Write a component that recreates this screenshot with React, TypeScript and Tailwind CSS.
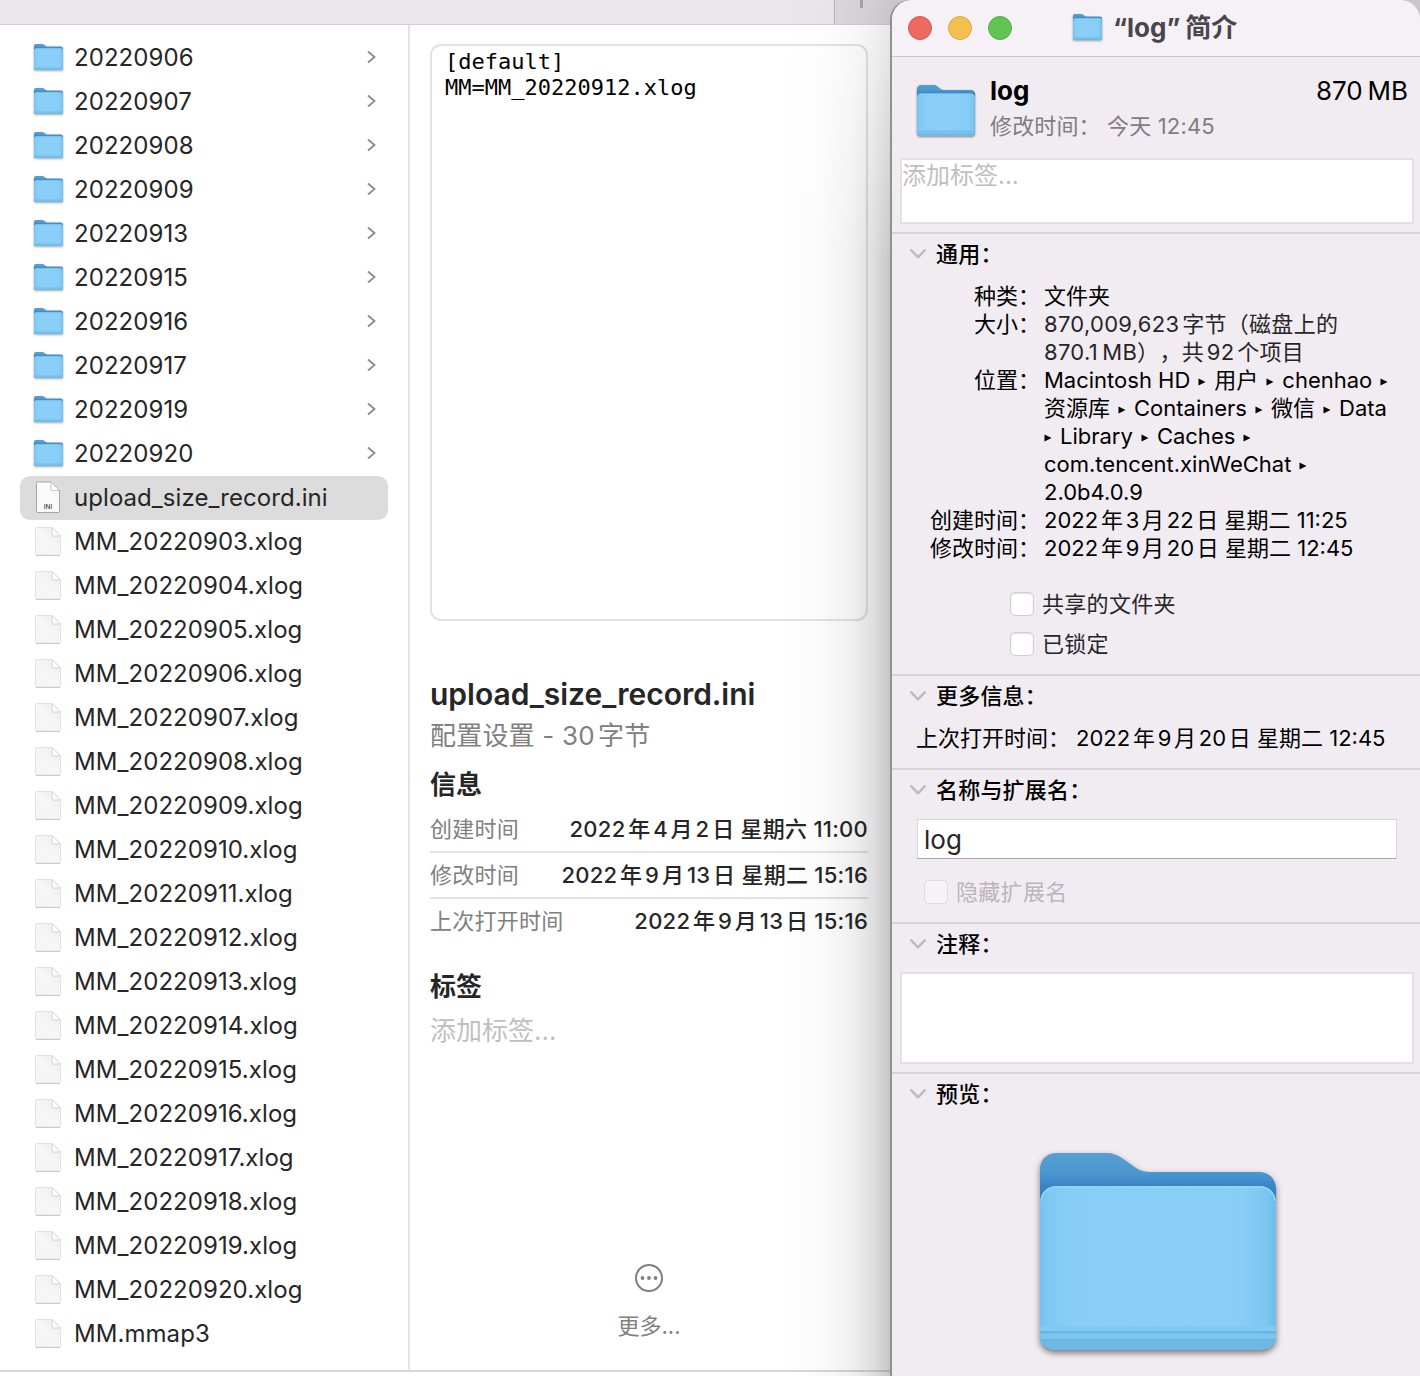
import { useId, type ReactNode } from 'react';
import clsx from 'clsx';

const folders = ['20220906', '20220907', '20220908', '20220909', '20220913', '20220915', '20220916', '20220917', '20220919', '20220920'];

const logs = [
	'MM_20220903.xlog',
	'MM_20220904.xlog',
	'MM_20220905.xlog',
	'MM_20220906.xlog',
	'MM_20220907.xlog',
	'MM_20220908.xlog',
	'MM_20220909.xlog',
	'MM_20220910.xlog',
	'MM_20220911.xlog',
	'MM_20220912.xlog',
	'MM_20220913.xlog',
	'MM_20220914.xlog',
	'MM_20220915.xlog',
	'MM_20220916.xlog',
	'MM_20220917.xlog',
	'MM_20220918.xlog',
	'MM_20220919.xlog',
	'MM_20220920.xlog',
	'MM.mmap3',
];

const Folder = ({ className }: { className?: string }) => {
	const id = useId();

	return (
		<svg viewBox="0 0 236 197" preserveAspectRatio="none" className={clsx('shrink-0 overflow-visible', className)}>
			<defs>
				<linearGradient id={`${id}b`} x1="0" y1="0" x2="0" y2="1">
					<stop offset="0" stopColor="#569fd0" />
					<stop offset="0.1" stopColor="#4b97cf" />
					<stop offset="0.18" stopColor="#3781c5" />
				</linearGradient>
				<linearGradient id={`${id}f`} x1="0" y1="0" x2="1" y2="0">
					<stop offset="0" stopColor="#76c2ee" />
					<stop offset="0.04" stopColor="#80c9f3" />
					<stop offset="0.14" stopColor="#88cef7" />
					<stop offset="0.5" stopColor="#8acff8" />
					<stop offset="0.86" stopColor="#88cef7" />
					<stop offset="0.96" stopColor="#7cc6f1" />
					<stop offset="1" stopColor="#70bae8" />
				</linearGradient>
			</defs>
			<path
				fill={`url(#${id}b)`}
				d="M0 17C0 6 7 0 17 0H67C73 0 77 2 82 5L96 15C101 18 105 19 111 19H219C229 19 236 26 236 36V180C236 190 229 197 219 197H17C7 197 0 190 0 180Z"
			/>
			<path fill={`url(#${id}f)`} d="M0 50C0 40 7 33 17 33H219C229 33 236 40 236 50V180C236 190 229 197 219 197H17C7 197 0 190 0 180Z" />
			<path fill="none" stroke="#92d8fb" strokeWidth="1.5" d="M1 48C2 39 8 33.7 17 33.7H219C228 33.7 234 39 235 48" />
			<path fill="#6eb8e4" d="M0 187H236C234 193 228 197 219 197H17C8 197 2 193 0 187Z" />
			<path fill="#80c9f3" d="M0 173H236V178H0Z" />
			<path fill="#7cc5f0" d="M0 181H236V186H0Z" />
			<path fill="#6ab4e0" d="M0 178H236V180.500H0ZM0 186H236V187.500H0Z" />
		</svg>
	);
};

const File = ({ ini }: { ini?: boolean }) => {
	const id = useId();

	return (
		<svg viewBox="0 0 30 32" className="mb-[2px] h-8 w-[30px] shrink-0 overflow-visible">
			<defs>
				<linearGradient id={id} x1="1" y1="0" x2="0" y2="1">
					<stop offset="0" stopColor="#ececec" />
					<stop offset="0.5" stopColor="#f6f6f6" />
					<stop offset="1" stopColor="#f4f4f4" />
				</linearGradient>
			</defs>
			{ini ? (
				<>
					<path d="M4.500 1H18L26.500 9.500V30.500Q26.500 31.500 25.500 31.500H4.500Q3.500 31.500 3.500 30.500V2Q3.500 1 4.500 1Z" fill="#fafafa" stroke="#a6a6a6" strokeWidth="1" />
					<path d="M18 1V8.500Q18 9.500 19 9.500H26.500Z" fill="#fff" stroke="#b9b9b9" strokeWidth="0.8" />
					<text x="15" y="27.500" textAnchor="middle" fontSize="6.500" fill="#222" fontFamily="Inter, sans-serif">
						INI
					</text>
				</>
			) : (
				<>
					<path d="M3.500 2.500H19L27.500 11V29Q27.500 30 26.500 30H3.500Q2.500 30 2.500 29V3.500Q2.500 2.500 3.500 2.500Z" fill={`url(#${id})`} stroke="#e2e2e2" strokeWidth="1" />
					<path d="M3 30.500H27" stroke="#cbcbcb" strokeWidth="1" />
					<path d="M19 2.500V10Q19 11 20 11H27.500Z" fill="#fff" stroke="#cfcfcf" strokeWidth="0.9" />
				</>
			)}
		</svg>
	);
};

const Row = ({ icon, name, selected, arrow }: { icon: ReactNode; name: string; selected?: boolean; arrow?: boolean }) => (
	<li className={clsx('flex h-11 items-center rounded-[10px] pr-[11px] pl-[13px]', selected && 'bg-[#dcdcdc]')}>
		{icon}
		<span className="ml-[11px] flex-1 text-[24px] leading-[44px] tracking-[0.06px] text-[#262626]">{name}</span>
		{arrow && (
			<svg viewBox="0 0 12 16" className="mb-[2px] h-4 w-3" fill="none" stroke="#8c8c8c" strokeWidth="1.800">
				<path d="M3 2.500L9.500 8L3 13.500" />
			</svg>
		)}
	</li>
);

const InfoRow = ({ label, value, last }: { label: string; value: string; last?: boolean }) => (
	<div className={clsx('flex h-[46px] items-center justify-between text-[22px] tracking-[0.25px]', last ? 'pb-[2px]' : 'border-b-2 border-[#e3e3e3]')}>
		<span className="text-[#808080]">{label}</span>
		<span className="font-medium text-[#262626]">{value}</span>
	</div>
);

const Section = ({ title, className, children }: { title: string; className: string; children?: ReactNode }) => (
	<section className={clsx('border-t-2 border-[#d9d3da]', className)}>
		<h2 className="flex h-10 items-center pl-[18px] text-[22px] font-medium tracking-[0.2px] text-black">
			<svg viewBox="0 0 16 10" className="mr-[10px] h-[10px] w-4" fill="none" stroke="#bdb9be" strokeWidth="2.400" strokeLinecap="round" strokeLinejoin="round">
				<path d="M1.300 1.300L8 8.300L14.700 1.300" />
			</svg>
			{title}
		</h2>
		{children}
	</section>
);

const Detail = ({ label, children }: { label: string; children: ReactNode }) => (
	<div className="flex">
		<dt className="w-[148px] shrink-0 text-right">{label}</dt>
		<dd className="ml-1 whitespace-nowrap">{children}</dd>
	</div>
);

const CheckBox = ({ label, disabled }: { label: string; disabled?: boolean }) => (
	<label className={clsx('flex h-[33px] items-center gap-[8px] text-[22px] tracking-[0.3px]', disabled ? 'text-[#b9b5ba]' : 'text-[#272528]')}>
		<span
			className={clsx(
				'size-6 rounded-[5px] border',
				disabled ? 'border-[#dfdae0] bg-[#f6f3f7]' : 'border-[#d0ccd1] bg-white shadow-[inset_0_1px_2px_rgba(0,0,0,0.12)]',
			)}
		/>
		<span className="pt-[2px] leading-[31px]">{label}</span>
	</label>
);

const Arrow = ({ first }: { first?: boolean }) => (
	<svg viewBox="0 0 8 8" className={clsx('mr-[8px] inline-block size-2 align-[2px]', !first && 'ml-[8px]')}>
		<path d="M0.500 0.500L7.500 4L0.500 7.500Z" fill="#000" />
	</svg>
);

const App = () => (
	<div className="flex h-[1376px] w-[1420px] overflow-hidden bg-[#c9c5cb] font-['Inter','Noto_Sans_CJK_SC',sans-serif] [text-autospace:normal] [text-spacing-trim:space-all]">
		{/* FINDER */}
		<div className="relative flex w-[890px] shrink-0 flex-col bg-white">
			<div className="flex h-[25px] shrink-0 border-b border-[#d3ced5] bg-[#ebe6ec]">
				<div className="w-[834px]"></div>
				<div className="flex flex-1 border-l border-[#bbb6bd] bg-[#ddd7de] pl-[25px]">
					<div className="h-2 w-[3px] bg-[#aaa5ac]"></div>
				</div>
			</div>
			<div className="flex h-[1347px] shrink-0 border-b-2 border-[#d8d8d8]">
				<ul className="w-[410px] shrink-0 border-r-2 border-[#e3e3e3] pt-[11px] pr-5 pl-5">
					{folders.map((name) => (
						<Row key={name} name={name} arrow icon={<Folder className="mr-[0.500px] mb-[2px] ml-[0.500px] h-[26px] w-[29px] drop-shadow-[0_1px_1px_rgba(0,0,0,0.35)]" />} />
					))}
					<Row name="upload_size_record.ini" selected icon={<File ini />} />
					{logs.map((name) => (
						<Row key={name} name={name} icon={<File />} />
					))}
				</ul>
				<div className="flex w-[478px] flex-col pt-[19px] pr-[20px] pl-5">
					<pre className="h-[577px] w-[438px] shrink-0 rounded-[11px] border-2 border-[#e2e2e2] pt-[3px] pl-[13px] font-['DejaVu_Sans_Mono','Liberation_Mono',monospace] text-[22px] leading-[26px] text-black">
						{'[default]\nMM=MM_20220912.xlog'}
					</pre>
					<div className="mt-[54px] text-[30px] leading-[38px] font-semibold tracking-[-0.02px] text-[#262626]">upload_size_record.ini</div>
					<div className="mt-[4px] text-[26px] leading-[38px] tracking-[0.2px] text-[#808080]">配置设置 - 30字节</div>
					<div className="mt-[11px] text-[26px] leading-[38px] font-bold text-[#262626]">信息</div>
					<div className="mt-[3px]">
						<InfoRow label="创建时间" value="2022年4月2日 星期六 11:00" />
						<InfoRow label="修改时间" value="2022年9月13日 星期二 15:16" />
						<InfoRow label="上次打开时间" value="2022年9月13日 15:16" last />
					</div>
					<div className="mt-[23px] text-[26px] leading-[38px] font-bold text-[#262626]">标签</div>
					<div className="mt-[6px] text-[26px] leading-[38px] text-[#bfbfbf]">添加标签...</div>
					<div className="mt-[214px] flex flex-col items-center">
						<svg viewBox="0 0 28 28" className="size-7" fill="none" stroke="#7f7f7f" strokeWidth="2">
							<circle cx="14" cy="14" r="13" />
							<g fill="#7f7f7f" stroke="none">
								<circle cx="7.500" cy="14" r="1.900" />
								<circle cx="14" cy="14" r="1.900" />
								<circle cx="20.500" cy="14" r="1.900" />
							</g>
						</svg>
						<div className="mt-[18px] text-[22px] leading-[32px] text-[#808080]">更多...</div>
					</div>
				</div>
			</div>
			{/* shadow cast by the info window */}
			<div className="absolute top-0 right-0 h-full w-[110px] bg-[linear-gradient(to_right,transparent,rgba(0,0,0,0.015)_35%,rgba(0,0,0,0.06)_65%,rgba(0,0,0,0.13)_85%,rgba(0,0,0,0.22))] [mask-image:linear-gradient(to_bottom,rgba(0,0,0,0.35),#000_260px)]"></div>
		</div>

		{/* INFO */}
		<div className="relative ml-[2px] flex w-[528px] shrink-0 flex-col rounded-t-[20px] bg-[#f1ecf2] shadow-[-2px_0_0_#929095]">
			<div className="flex h-[57px] shrink-0 items-center rounded-t-[20px] border-b border-[#cdc6ce] bg-[#f6f0f7] pl-[16px]">
				<div className="flex gap-4">
					<div className="size-6 rounded-full border border-[#d5584f] bg-[#ec6a5e]"></div>
					<div className="size-6 rounded-full border border-[#dba83f] bg-[#f4bf4f]"></div>
					<div className="size-6 rounded-full border border-[#53ad45] bg-[#61c554]"></div>
				</div>
				<Folder className="mb-[3px] ml-[61px] h-[26px] w-[29px] drop-shadow-[0_1px_1px_rgba(0,0,0,0.35)]" />
				<h1 className="mb-[2px] ml-[11px] text-[26px] font-bold whitespace-nowrap text-[#49454a]">
					“log”<span className="ml-[5px]">简介</span>
				</h1>
			</div>

			<div className="flex h-[101px] shrink-0 pl-[25px]">
				<Folder className="mt-[28px] h-[51px] w-[58px] drop-shadow-[0_1px_1px_rgba(0,0,0,0.45)]" />
				<div className="ml-[15px] flex-1 pt-[16px]">
					<div className="flex justify-between pr-[12px] text-[26px] leading-[36px] text-black">
						<span className="font-bold">log</span>
						<span>870{'\u2009'}MB</span>
					</div>
					<div className="text-[22px] leading-[34px] tracking-[0.15px] text-[#807c81]">修改时间： 今天 12:45</div>
				</div>
			</div>
			<div className="mr-[6px] ml-[8px] h-[66px] shrink-0 border-2 border-[#e3dfe4] bg-white text-[24px] leading-[32px] text-[#bfbfbf]">添加标签...</div>

			<Section title="通用：" className="mt-[8px] h-[442px]">
				<dl className="mt-[8px] text-[22px] leading-[28px] text-black">
					<Detail label="种类：">文件夹</Detail>
					<Detail label="大小：">
						<span className="tracking-[0.300px] text-[#272528]">
							870,009,623字节（磁盘上的
							<br />
							870.1{'\u2009'}MB），共92个项目
						</span>
					</Detail>
					<Detail label="位置：">
						Macintosh HD
						<Arrow />
						用户
						<Arrow />
						chenhao
						<Arrow />
						<br />
						资源库
						<Arrow />
						Containers
						<Arrow />
						微信
						<Arrow />
						Data
						<br />
						<Arrow first />
						Library
						<Arrow />
						Caches
						<Arrow />
						<br />
						com.tencent.xinWeChat
						<Arrow />
						<br />
						2.0b4.0.9
					</Detail>
					<Detail label="创建时间：">2022年3月22日 星期二 11:25</Detail>
					<Detail label="修改时间：">2022年9月20日 星期二 12:45</Detail>
				</dl>
				<div className="mt-[25px] flex flex-col gap-[7px] pl-[118px]">
					<CheckBox label="共享的文件夹" />
					<CheckBox label="已锁定" />
				</div>
			</Section>

			<Section title="更多信息：" className="h-[94px]">
				<div className="flex pl-[24px] text-[22px] leading-[44px] whitespace-nowrap text-black">
					<span>上次打开时间：</span>
					<span className="ml-[6px]">2022年9月20日 星期二 12:45</span>
				</div>
			</Section>

			<Section title="名称与扩展名：" className="h-[154px]">
				<div className="mt-[9px] mr-[23px] mb-[16px] ml-[25px] h-10 border border-[#d9d4da] border-b-[#aaa6ab] bg-white pt-px pl-[6px] text-[26px] leading-[38px] text-[#262626]">log</div>
				<div className="pl-8">
					<CheckBox label="隐藏扩展名" disabled />
				</div>
			</Section>

			<Section title="注释：" className="h-[150px]">
				<div className="mt-[8px] mr-[6px] ml-[8px] h-[92px] border-2 border-[#e3dfe4] bg-white"></div>
			</Section>

			<Section title="预览：" className="h-[304px]">
				<div className="mt-[39px] flex justify-center pl-[4px]">
					<Folder className="h-[197px] w-[236px] drop-shadow-[0_3px_3px_rgba(0,0,0,0.5)]" />
				</div>
			</Section>
		</div>
	</div>
);

export default App;
